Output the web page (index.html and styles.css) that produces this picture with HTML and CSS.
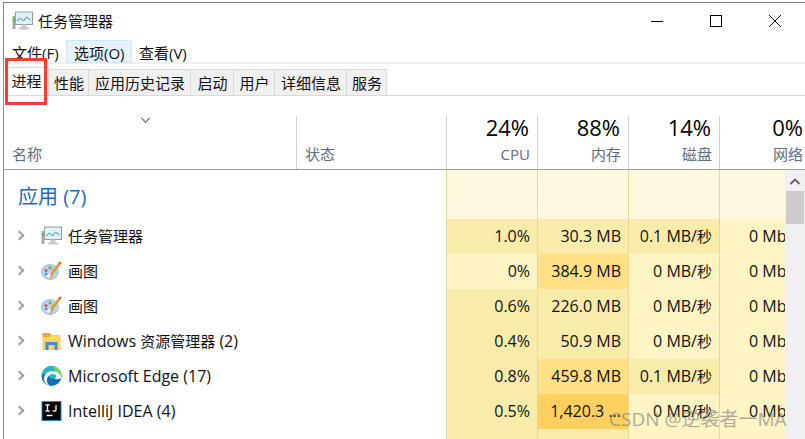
FILE: index.html
```html
<!DOCTYPE html>
<html lang="zh-CN">
<head>
<meta charset="utf-8">
<title>任务管理器</title>
<link rel="stylesheet" href="styles.css">
</head>
<body>
<svg class="defs" width="0" height="0" aria-hidden="true">
  <symbol id="tm" viewBox="0 0 21 20">
    <rect x="3.500" y="1" width="17" height="12.500" fill="#dff1fb" stroke="#9a9a9a"/>
    <path d="M5 10l3.500-3 3 3 3-4 4 3" fill="none" stroke="#3f8fc4" stroke-width="1"/>
    <path d="M10 13.500h4l1 3h2v2H7v-2h2z" fill="#c9c9c9"/>
    <rect x="0.500" y="5" width="3" height="13" fill="#a8a8a8"/>
    <rect x="1" y="7" width="2" height="3" fill="#4fc04f"/>
  </symbol>
  <symbol id="paint" viewBox="0 0 21 20">
    <ellipse cx="9" cy="11" rx="8.500" ry="7.500" fill="#b4d3ea" stroke="#8fa9bd" stroke-width=".6"/>
    <ellipse cx="8" cy="14.500" rx="3" ry="2" fill="#eef5fb"/>
    <circle cx="5" cy="9.500" r="1.500" fill="#d9534f"/>
    <circle cx="9" cy="6.800" r="1.500" fill="#62b34f"/>
    <circle cx="5.300" cy="13" r="1.300" fill="#4e86c6"/>
    <circle cx="12" cy="9" r="1.300" fill="#e6b93a"/>
    <path d="M19.500 1l1 1.500-7.500 9.500-4 7.500 1-8 7-9z" fill="#e09a3a"/>
    <path d="M17 1.500l3 1.500 .5-2.500z" fill="#a8662a"/>
  </symbol>
  <symbol id="folder" viewBox="0 0 20 20">
    <path d="M1 2h7l2 2h9v15H1z" fill="#fcd462"/>
    <path d="M1 2h7l2 2-2 2H1z" fill="#e5a83b"/>
    <path d="M4 19v-8h12v8h-3v-5H7v5z" fill="#3a8fd8"/>
  </symbol>
  <symbol id="edge" viewBox="0 0 20 20">
    <circle cx="10" cy="10" r="10" fill="#0f6fb8"/>
    <path d="M.4 8C2 3 6 0 10 0c5.500 0 10 4.500 10 10 0 1-.1 1.800-.3 2.500H9.500C7 9.500 3.500 8 .4 8z" fill="#2bb5c4"/>
    <path d="M11 .1c4.500.5 8 4 8.800 8.500.3 1.500.2 3-.1 3.900H14.500C15.500 9 14 4 11 .1z" fill="#6fd66a"/>
    <path d="M7.500 5.800c-3 1-5 3.700-5 7C2.500 16 5 18.500 8 19.500 5.800 17.500 5 15.500 5.500 13c.5-3 3-5 6-5 1.800 0 3 .8 3.200 2.200.1 1-.6 1.800-1.700 2.300 1.200 1 5 1.200 6.700-1C19.500 8.500 16 5.500 12.500 5.200c-1.800-.2-3.500 0-5 .6z" fill="#fff"/>
  </symbol>
  <symbol id="idea" viewBox="0 0 20 20">
    <rect x=".5" y=".5" width="19" height="19" fill="#000" stroke="#1f7fe0"/>
    <path d="M5 14.500h6" stroke="#fff" stroke-width="1.400"/>
    <path d="M4 4h4M6 4v6M4 10h4M14.500 4v5c0 1.500-2.500 1.500-3 .3" fill="none" stroke="#fff" stroke-width="1.300"/>
  </symbol>
</svg>

<div class="window">
  <header class="titlebar">
    <svg class="title-icon"><use href="#tm"/></svg>
    <span class="title-text">任务管理器</span>
    <div class="controls">
      <svg class="ctl" viewBox="0 0 14 14"><path d="M1 7.500h12" stroke="#000" fill="none"/></svg>
      <svg class="ctl" viewBox="0 0 14 14"><rect x="1.500" y="1.500" width="11" height="11" stroke="#000" fill="none"/></svg>
      <svg class="ctl" viewBox="0 0 14 14"><path d="M1 1l12 12M13 1L1 13" stroke="#000" fill="none"/></svg>
    </div>
  </header>

  <nav class="menubar">
    <span class="menu-item">文件(F)</span>
    <span class="menu-item is-hot">选项(O)</span>
    <span class="menu-item">查看(V)</span>
  </nav>

  <div class="tabs">
    <span class="tab is-active">进程</span>
    <span class="tab t-40">性能</span>
    <span class="tab t-101">应用历史记录</span>
    <span class="tab t-43">启动</span>
    <span class="tab t-41">用户</span>
    <span class="tab t-72">详细信息</span>
    <span class="tab t-40">服务</span>
  </div>

  <div class="head">
    <div class="hc hc-name">
      <svg class="sort" viewBox="0 0 12 7"><path d="M1 1l5 5 5-5" fill="none" stroke="#5f6b7c" stroke-width="1.300"/></svg>
      <span class="hc-label">名称</span>
    </div>
    <div class="hc hc-status"><span class="hc-label">状态</span></div>
    <div class="hc hc-num"><span class="pct">24%</span><span class="hc-label">CPU</span></div>
    <div class="hc hc-num"><span class="pct">88%</span><span class="hc-label">内存</span></div>
    <div class="hc hc-num"><span class="pct">14%</span><span class="hc-label">磁盘</span></div>
    <div class="hc hc-num hc-net"><span class="pct">0%</span><span class="hc-label">网络</span></div>
    <div class="hc-gap"></div>
  </div>

  <div class="body">
    <div class="table">
      <div class="row row-group">
        <div class="cell-name group-name">应用 (7)</div>
        <div class="cell-status"></div>
        <div class="n h0"></div><div class="n h0"></div><div class="n h0"></div><div class="n h0 net"></div>
      </div>
      <div class="row">
        <div class="cell-name"><span class="chev"></span><svg class="app"><use href="#tm"/></svg><span class="zh">任务管理器</span></div>
        <div class="cell-status"></div>
        <div class="n h2">1.0%</div><div class="n h2">30.3 MB</div><div class="n h2">0.1 MB/<span class="zh">秒</span></div><div class="n h1 net">0 Mb</div>
      </div>
      <div class="row">
        <div class="cell-name"><span class="chev"></span><svg class="app"><use href="#paint"/></svg><span class="zh">画图</span></div>
        <div class="cell-status"></div>
        <div class="n h1">0%</div><div class="n h3">384.9 MB</div><div class="n h1">0 MB/<span class="zh">秒</span></div><div class="n h1 net">0 Mb</div>
      </div>
      <div class="row">
        <div class="cell-name"><span class="chev"></span><svg class="app"><use href="#paint"/></svg><span class="zh">画图</span></div>
        <div class="cell-status"></div>
        <div class="n h2">0.6%</div><div class="n h2">226.0 MB</div><div class="n h1">0 MB/<span class="zh">秒</span></div><div class="n h1 net">0 Mb</div>
      </div>
      <div class="row">
        <div class="cell-name"><span class="chev"></span><svg class="app"><use href="#folder"/></svg><span>Windows <span class="zh">资源管理器</span> (2)</span></div>
        <div class="cell-status"></div>
        <div class="n h2">0.4%</div><div class="n h2">50.9 MB</div><div class="n h1">0 MB/<span class="zh">秒</span></div><div class="n h1 net">0 Mb</div>
      </div>
      <div class="row">
        <div class="cell-name"><span class="chev"></span><svg class="app"><use href="#edge"/></svg>Microsoft Edge (17)</div>
        <div class="cell-status"></div>
        <div class="n h2">0.8%</div><div class="n h3">459.8 MB</div><div class="n h2">0.1 MB/<span class="zh">秒</span></div><div class="n h1 net">0 Mb</div>
      </div>
      <div class="row">
        <div class="cell-name"><span class="chev"></span><svg class="app"><use href="#idea"/></svg>IntelliJ IDEA (4)</div>
        <div class="cell-status"></div>
        <div class="n h2">0.5%</div><div class="n h4">1,420.3 ...</div><div class="n h1">0 MB/<span class="zh">秒</span></div><div class="n h1 net">0 Mb</div>
      </div>
      <div class="row">
        <div class="cell-name"></div>
        <div class="cell-status"></div>
        <div class="n h2"></div><div class="n h2"></div><div class="n h1"></div><div class="n h1 net"></div>
      </div>
    </div>
    <div class="scrollbar">
      <svg class="sb-up" viewBox="0 0 12 7"><path d="M1.500 6L6 1.500 10.500 6" fill="none" stroke="#606060" stroke-width="1.800"/></svg>
      <div class="sb-thumb"></div>
    </div>
  </div>
</div>

<div class="callout"></div>
<div class="watermark">CSDN @逆袭者一MA</div>
</body>
</html>
```
FILE: styles.css
```css
* { box-sizing: border-box; }
html, body { margin: 0; padding: 0; width: 805px; height: 439px; overflow: hidden; background: #fff; }
body { font-family: "Open Sans", "Noto Sans CJK SC", sans-serif; color: #000; position: relative; }
.defs { position: absolute; }
.window {
  margin: 2px 0 0 3px;
  width: 802px;
  height: 437px;
  border-top: 1px solid #7a7a7a;
  border-left: 1px solid #8a8a8a;
  display: flex;
  flex-direction: column;
  overflow: hidden;
}
.titlebar { height: 37px; flex: none; display: flex; align-items: center; padding: 0 0 2px 8px; }
.title-icon { width: 21px; height: 20px; margin-right: 5px; }
.title-text { font-size: 15px; color: #111; line-height: 20px; }
.controls { margin-left: auto; display: flex; align-items: center; gap: 45px; padding-right: 23px; }
.ctl { width: 14px; height: 14px; display: block; }
.menubar {
  height: 24px;
  flex: none;
  display: flex;
  border-bottom: 2px solid #f0f0f0;
  font-size: 15px;
}
.menu-item { height: 23px; padding: 1px 7px 0; line-height: 23px; color: #111; border: 1px solid transparent; white-space: nowrap; }
.menu-item:first-child { width: 62px; }
.menu-item.is-hot { background: #e5f3ff; border-color: #cce8ff; width: 66px; }
.menu-item:last-child { padding-left: 6px; }
.tabs {
  height: 32px;
  flex: none;
  display: flex;
  align-items: flex-end;
  border-bottom: 1px solid #d9d9d9;
  font-size: 15px;
}
.tab {
  height: 26px;
  background: #f0f0f0;
  border: 1px solid #d9d9d9;
  border-left: 0;
  border-bottom: 0;
  text-align: center;
  line-height: 26px;
  white-space: nowrap;
  color: #111;
  padding-left: 1px;
}
.tab.is-active { height: 28px; width: 45px; background: #fff; line-height: 26px; padding: 0 0 2px 1px; }
.t-40 { width: 40px; }
.t-43 { width: 43px; }
.t-41 { width: 41px; }
.t-72 { width: 72px; }
.t-101 { width: 102px; }
.head {
  height: 74px;
  flex: none;
  display: flex;
  border-bottom: 1px solid #a0a0a0;
  padding-top: 20px;
}
.hc {
  height: 53px;
  border-right: 1px solid #d0d0d0;
  display: flex;
  flex-direction: column;
  justify-content: flex-end;
  position: relative;
  padding-bottom: 6px;
}
.hc-label { font-size: 15px; line-height: 18px; color: #5f6d80; }
.hc-name { width: 293px; padding-left: 8px; }
.sort { position: absolute; left: 136px; top: 1px; width: 11px; height: 6px; }
.hc-status { width: 150px; padding-left: 8px; }
.hc-num { width: 91px; align-items: flex-end; padding-right: 7px; }
.hc-net { width: 66px; border-right: 0; padding-right: 0; align-items: flex-start; }
.hc-net .pct { align-self: flex-end; margin-right: -17px; }
.hc-net .hc-label { margin-left: 53px; white-space: nowrap; }
.pct { font-size: 22px; line-height: 26px; color: #000; margin-bottom: 5px; margin-right: 1px; }
.hc-gap { flex: 1; }
.body { flex: 1; display: flex; min-height: 0; }
.table { width: 781px; flex: none; }
.row { height: 35px; display: flex; font-size: 16px; }
.row-group { height: 49px; }
.zh { font-size: 15px; }
.cell-name { width: 293px; display: flex; align-items: center; padding: 0 0 1px 12px; white-space: nowrap; color: #111; flex: none; }
.cell-name > .zh { margin-bottom: 2px; }
.group-name { font-size: 20px; color: #1f67c8; padding: 5px 0 3px 14px; }
.cell-status { width: 150px; flex: none; }
.chev {
  width: 7px; height: 7px;
  border-top: 2px solid #a0a0a0;
  border-right: 2px solid #a0a0a0;
  transform: rotate(45deg);
  margin: 0 18px 2px 0;
  flex: none;
}
.app { width: 21px; height: 20px; margin-right: 6px; flex: none; }
.n {
  width: 91px;
  flex: none;
  line-height: 34px;
  text-align: right;
  padding-right: 7px;
  border-right: 1px solid #e8d49c;
  white-space: nowrap;
  color: #111;
}
.n:nth-child(3) { border-left: 1px solid #e8d49c; width: 92px; margin-left: -1px; }
.net { width: 66px; border-right: 0; text-align: left; padding: 0 0 0 29px; overflow: hidden; }
.h0 { background: #fef8e0; }
.h1 { background: #fef4c4; }
.h2 { background: #f9ecaa; }
.h3 { background: #ffe084; }
.h4 { background: #ffd05f; }
.scrollbar { width: 20px; flex: none; background: #f0f0f0; position: relative; }
.sb-up { position: absolute; left: 4px; top: 8px; width: 12px; height: 7px; }
.sb-thumb { position: absolute; left: 1px; right: 1px; top: 21px; height: 33px; background: #cdcdcd; }
.callout { position: absolute; left: 5px; top: 58px; width: 42px; height: 47px; border: 3px solid #f93a3a; }
.watermark { position: absolute; left: 609px; top: 407px; font-size: 19px; line-height: 24px; color: rgba(120, 120, 120, .6); white-space: nowrap; }
```
